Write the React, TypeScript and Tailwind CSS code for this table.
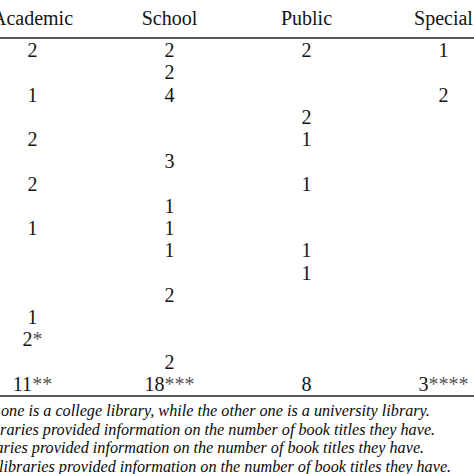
const HEAD = ["Academic", "School", "Public", "Special"];

const ROWS: string[][] = [
  ["2", "2", "2", "1"],
  ["", "2", "", ""],
  ["1", "4", "", "2"],
  ["", "", "2", ""],
  ["2", "", "1", ""],
  ["", "3", "", ""],
  ["2", "", "1", ""],
  ["", "1", "", ""],
  ["1", "1", "", ""],
  ["", "1", "1", ""],
  ["", "", "1", ""],
  ["", "2", "", ""],
  ["1", "", "", ""],
  ["2*", "", "", ""],
  ["", "2", "", ""],
  ["11**", "18***", "8", "3****"],
];

const NOTES = [
  { text: "one is a college library, while the other one is a university library.", ml: "ml-[1px]" },
  { text: "libraries provided information on the number of book titles they have.", ml: "ml-[-17px]" },
  { text: "libraries provided information on the number of book titles they have.", ml: "ml-[-28px]" },
  { text: "libraries provided information on the number of book titles they have.", ml: "ml-[-1px]" },
];

export default function App() {
  return (
    <div className="w-[474px] h-[474px] overflow-hidden bg-white text-[#141414] [font-family:'Liberation_Serif',serif]">
      <div className="ml-[-36px] w-[548px]">
        <div className="grid grid-cols-4 h-[39px] pt-[7px] text-[20px] leading-[22px] border-b-2 border-[#5a5a5a]">
          {HEAD.map((h) => (
            <div key={h} className="text-center whitespace-nowrap">{h}</div>
          ))}
        </div>
        <div className="border-b-2 border-[#5a5a5a]">
          {ROWS.map((r, i) => (
            <div key={i} className="grid grid-cols-4 h-[22.27px] text-[20px] leading-[22px]">
              {r.map((c, j) => (
                <div key={j} className="text-center whitespace-nowrap">
                  {c.replace(/\*+$/, "")}
                  {c.includes("*") && (
                    <span className="text-[#555]">{c.match(/\*+$/)?.[0]}</span>
                  )}
                </div>
              ))}
            </div>
          ))}
        </div>
      </div>
      <div className="pt-[5px] italic text-[16.2px] leading-[18.6px] text-[#0a0a0a]">
        {NOTES.map((n, i) => (
          <div key={i} className={`whitespace-nowrap ${n.ml}`}>{n.text}</div>
        ))}
      </div>
    </div>
  );
}
